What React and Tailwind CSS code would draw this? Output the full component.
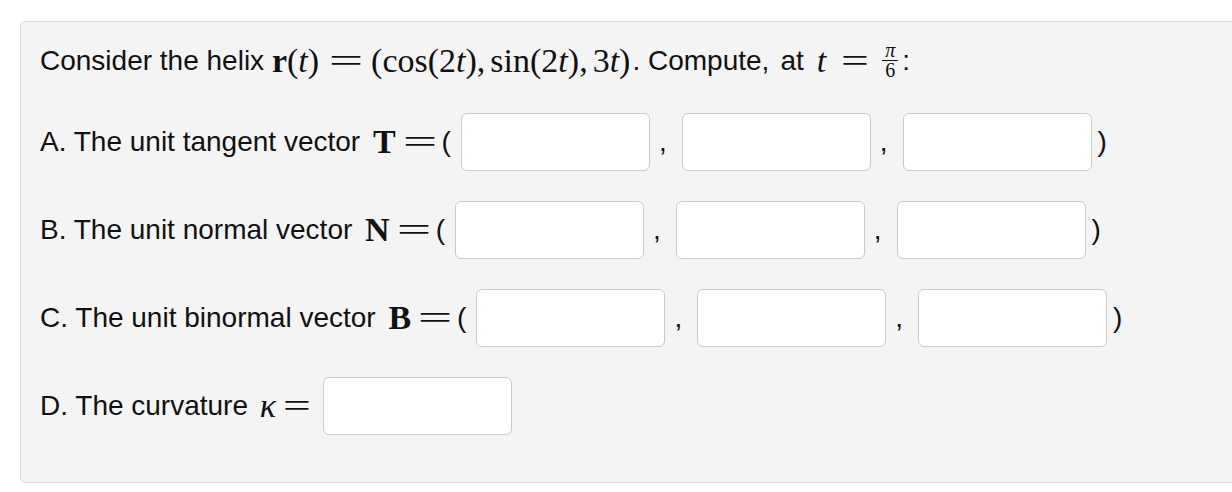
import React from 'react';

const sans = "font-['Liberation_Sans',Arial,sans-serif]";
const serif = "font-['Liberation_Serif','Times_New_Roman',serif]";

// wide "=" (rows A–C, and r(t) = …)
const Eq = ({ className = 'ml-[7px] mr-[5px]' }) => (
  <span className={`${serif} inline-block w-[34px] text-center text-[34px] leading-none scale-x-[1.8] ${className}`}>=</span>
);

// narrower "=" (t = π/6, κ =)
const EqS = ({ className = '' }) => (
  <span className={`${serif} inline-block w-[26px] text-center text-[34px] leading-none scale-x-[1.45] ${className}`}>=</span>
);

const Box = ({ className = '' }) => (
  <input
    type="text"
    className={`w-[189px] h-[58px] bg-white border-[1.5px] border-[#cacaca] rounded-[6px] outline-none ${className}`}
  />
);

const Comma = () => <span className="ml-[9px] mr-[15px]">,</span>;

function VectorRow({ label, sym, first }) {
  return (
    <div className={`flex items-center h-[58px] ${first ? 'mt-[33px]' : 'mt-[30px]'}`}>
      <span>{label}&nbsp;</span>
      <span className={`${serif} font-bold text-[34px] leading-none ml-[5px]`}>{sym}</span>
      <Eq />
      <span>(</span>
      <Box className="ml-[10px]" />
      <Comma />
      <Box />
      <Comma />
      <Box />
      <span className="ml-[6px]">)</span>
    </div>
  );
}

export default function App() {
  return (
    <div className="w-[1232px] h-[492px] overflow-hidden bg-white">
      <div className={`${sans} text-[28px] text-[#111] mt-[21px] ml-[20px] w-[1230px] bg-[#f4f4f4] border border-[#dcdcdc] rounded-[5px] pt-[20px] pl-[19px] pb-[47px]`}>
        {/* problem statement */}
        <div className="flex items-center h-[38px]">
          <span>Consider the helix&nbsp;</span>
          <span className={`${serif} text-[34px] leading-none flex items-center`}>
            <span className="font-bold">r</span>
            <span>(</span>
            <span className="italic">t</span>
            <span>)</span>
            <Eq className="ml-[10px] mr-[8px]" />
            <span>(cos(2</span>
            <span className="italic">t</span>
            <span>),</span>
            <span className="w-[5px]" />
            <span>sin(2</span>
            <span className="italic">t</span>
            <span>),</span>
            <span className="w-[5px]" />
            <span>3</span>
            <span className="italic">t</span>
            <span>)</span>
          </span>
          <span className="ml-[2px]">. Compute,</span>
          <span className="ml-[11px]">at</span>
          <span className={`${serif} italic text-[34px] leading-none ml-[13px]`}>t</span>
          <EqS className="ml-[16px] mr-[14px]" />
          <span className={`${serif} inline-flex flex-col items-center text-[20px] leading-[19px] mr-[4px] -mt-[2px]`}>
            <span className="italic px-[3px] border-b border-[#111]">π</span>
            <span>6</span>
          </span>
          <span>:</span>
        </div>

        <VectorRow label="A. The unit tangent vector" sym="T" first />
        <VectorRow label="B. The unit normal vector" sym="N" />
        <VectorRow label="C. The unit binormal vector" sym="B" />

        <div className="flex items-center h-[58px] mt-[30px]">
          <span>D. The curvature&nbsp;</span>
          <span className={`${serif} italic text-[34px] leading-none ml-[4px]`}>κ</span>
          <EqS className="ml-[8px] mr-[13px]" />
          <Box />
        </div>
      </div>
    </div>
  );
}
